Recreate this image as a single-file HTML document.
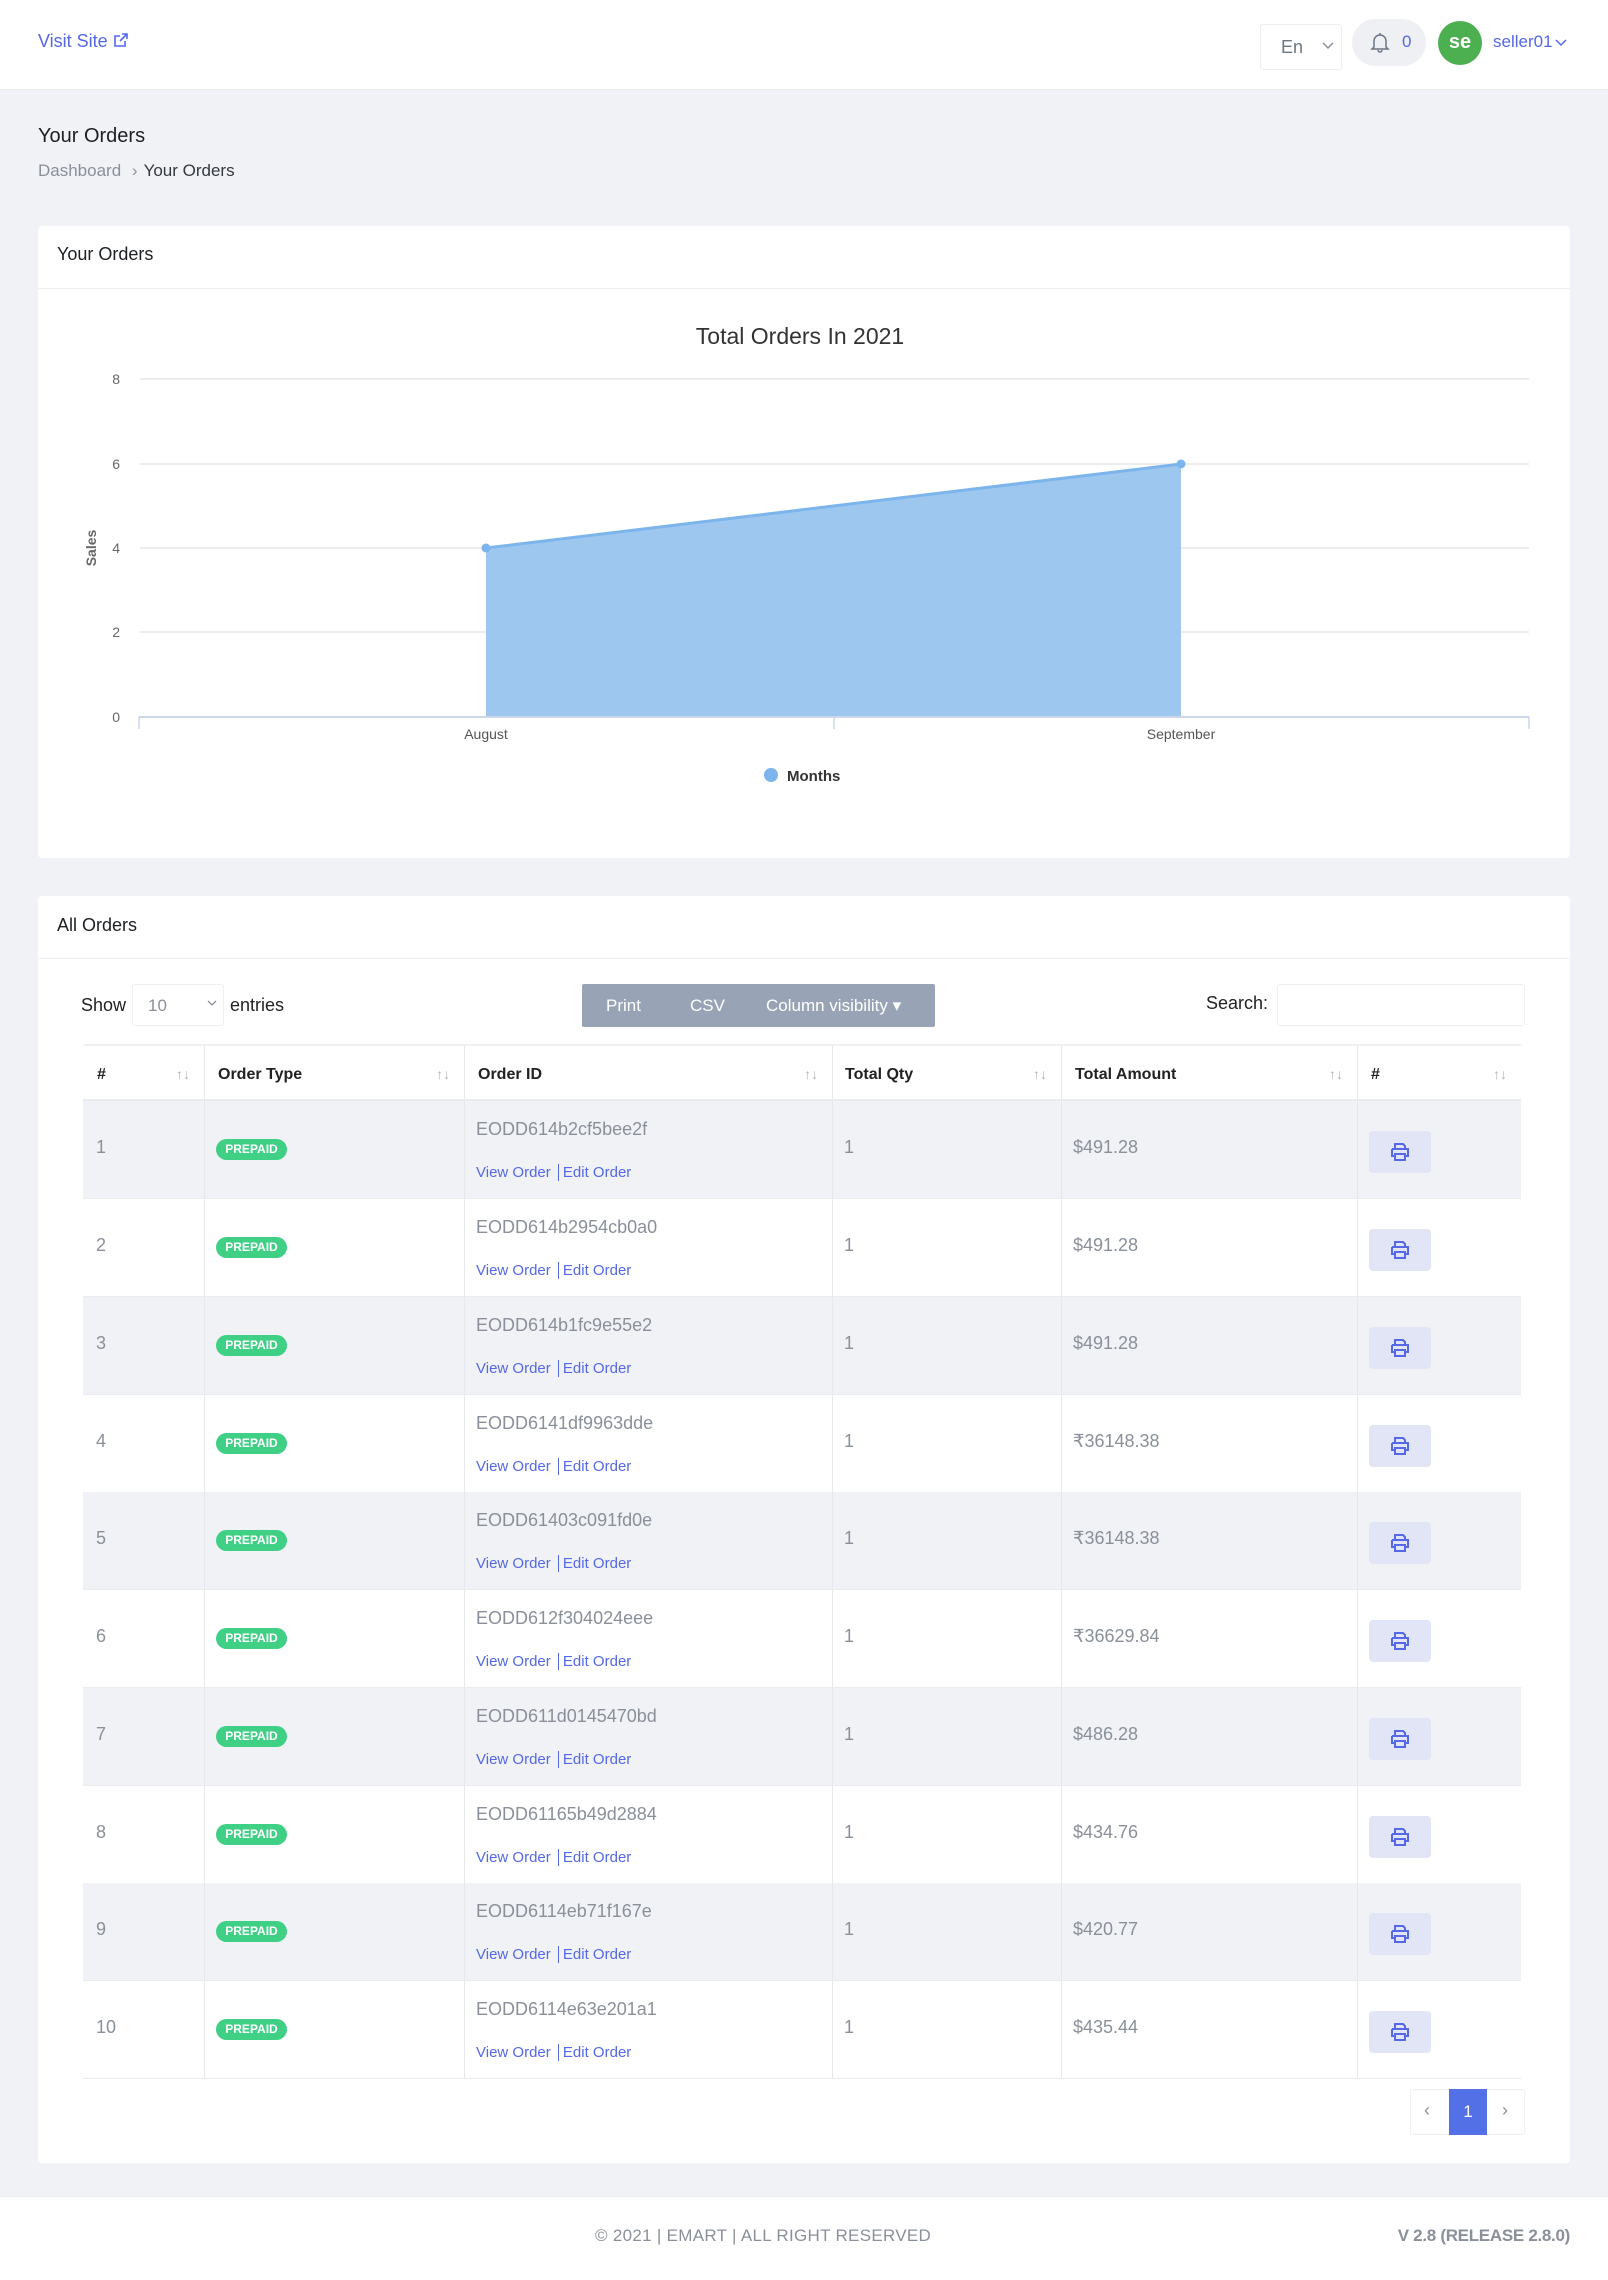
<!DOCTYPE html>
<html><head><meta charset="utf-8"><style>
*{margin:0;padding:0;box-sizing:border-box}
body{width:1608px;height:2280px;background:#f1f2f6;font-family:"Liberation Sans",sans-serif;position:relative;overflow:hidden;color:#343a40}
.a{position:absolute}
.hdr{left:0;top:0;width:1608px;height:90px;background:#fff;border-bottom:1px solid #e9eaee}
.card{background:#fff;border-radius:4px}
.row{left:83px;width:1438px;height:98px;border-bottom:1px solid #e9ecef}
.row.odd{background:#f1f2f6}
.vl{top:0;bottom:0;width:1px;background:#e6e8ec}
.badge{left:133px;top:38px;width:71px;height:21px;border-radius:11px;background:#3fcf85;color:#fff;font-size:12px;font-weight:bold;text-align:center;line-height:21px}
.num{left:13px;top:36px;font-size:18px;color:#8a909a}
.oid{left:393px;top:18px;font-size:18px;color:#8a909a}
.lnk{left:393px;top:63px;font-size:15px;color:#5468e8}
.lnk span{color:#5468e8;border-left:1px solid #5468e8;padding-left:4px;margin-left:3px}
.qty{left:761px;top:36px;font-size:18px;color:#8a909a}
.amt{left:990px;top:36px;font-size:18px;color:#8a909a}
.pb{left:1286px;top:30px;width:62px;height:42px;background:#e1e5f6;border-radius:4px}
.th{top:0;height:57px;line-height:57px;font-size:16px;font-weight:bold;color:#222}
.sort{font-size:14px;color:#b0b4bc;font-weight:normal}
</style></head><body>
<div class="a hdr"></div>
<div class="a" style="left:38px;top:31px;font-size:18px;color:#5468e8">Visit Site <svg width="16" height="16" viewBox="0 0 16 16" style="vertical-align:-1px"><path d="M12 9v5H2V4h5M9 2h5v5M14 2L7 9" fill="none" stroke="#5468e8" stroke-width="1.6"/></svg></div>
<div class="a" style="left:1260px;top:24px;width:82px;height:46px;border:1px solid #eceef2;border-radius:3px;background:#fff"></div>
<div class="a" style="left:1281px;top:37px;font-size:18px;color:#6c7684">En</div>
<svg class="a" style="left:1322px;top:42px" width="12" height="8" viewBox="0 0 12 8"><path d="M1 1l5 5 5-5" fill="none" stroke="#8a909a" stroke-width="1.5"/></svg>
<div class="a" style="left:1352px;top:19px;width:74px;height:47px;border-radius:24px;background:#eff0f4"></div>
<svg class="a" style="left:1370px;top:31px" width="20" height="22" viewBox="0 0 20 22"><path d="M10 2v2M4 16V10a6 6 0 0112 0v6l2 2H2zM8 19a2 2 0 004 0" fill="none" stroke="#6c7684" stroke-width="1.5"/></svg>
<div class="a" style="left:1402px;top:32px;font-size:17px;color:#5468e8">0</div>
<div class="a" style="left:1438px;top:21px;width:44px;height:44px;border-radius:50%;background:#4caf50;color:#fff;font-weight:bold;font-size:20px;text-align:center;line-height:42px">se</div>
<div class="a" style="left:1493px;top:32px;font-size:17px;color:#5468e8">seller01<svg width="12" height="8" viewBox="0 0 12 8" style="margin-left:2px"><path d="M1 1l5 5 5-5" fill="none" stroke="#5468e8" stroke-width="1.5"/></svg></div>

<div class="a" style="left:38px;top:125px;font-size:20px;color:#1c1f24">Your Orders</div>
<div class="a" style="left:38px;top:161px;font-size:17px;color:#8a909a">Dashboard <span style="margin:0 6px;color:#8a909a">›</span><span style="color:#343a40">Your Orders</span></div>

<div class="a card" style="left:38px;top:226px;width:1532px;height:632px"></div>
<div class="a" style="left:38px;top:288px;width:1532px;height:1px;background:#eef0f3"></div>
<div class="a" style="left:57px;top:244px;font-size:18px;color:#1c1f24">Your Orders</div>
<svg class="a" style="left:38px;top:300px" width="1532" height="500" viewBox="38 300 1532 500">
<text x="800" y="344" font-size="23" text-anchor="middle" fill="#333" font-family="Liberation Sans">Total Orders In 2021</text>
<g stroke="#e6e6e6" stroke-width="1.5"><line x1="140" y1="379" x2="1529" y2="379"/><line x1="140" y1="464" x2="1529" y2="464"/><line x1="140" y1="548" x2="1529" y2="548"/><line x1="140" y1="632" x2="1529" y2="632"/></g>
<g font-size="14" fill="#666" font-family="Liberation Sans" text-anchor="end"><text x="120" y="384">8</text><text x="120" y="469">6</text><text x="120" y="553">4</text><text x="120" y="637">2</text><text x="120" y="722">0</text></g>
<text transform="translate(96,548) rotate(-90)" font-size="14" font-weight="bold" fill="#666" text-anchor="middle" font-family="Liberation Sans">Sales</text>
<path d="M486 548L1181 464L1181 717L486 717Z" fill="#9ec7f0"/>
<path d="M486 548L1181 464" stroke="#7cb5ec" stroke-width="3"/>
<circle cx="486" cy="548" r="4.5" fill="#7cb5ec"/><circle cx="1181" cy="464" r="4.5" fill="#7cb5ec"/>
<line x1="139" y1="717" x2="1529" y2="717" stroke="#ccd6eb" stroke-width="2"/>
<g stroke="#ccd6eb" stroke-width="1.5"><line x1="139" y1="717" x2="139" y2="729"/><line x1="834" y1="717" x2="834" y2="729"/><line x1="1529" y1="717" x2="1529" y2="729"/></g>
<g font-size="14" fill="#555" font-family="Liberation Sans" text-anchor="middle"><text x="486" y="739">August</text><text x="1181" y="739">September</text></g>
<circle cx="771" cy="775" r="7" fill="#7cb5ec"/>
<text x="787" y="781" font-size="15" font-weight="bold" fill="#333" font-family="Liberation Sans">Months</text>
</svg>

<div class="a card" style="left:38px;top:896px;width:1532px;height:1267px"></div>
<div class="a" style="left:38px;top:958px;width:1532px;height:1px;background:#eef0f3"></div>
<div class="a" style="left:57px;top:915px;font-size:18px;color:#1c1f24">All Orders</div>
<div class="a" style="left:81px;top:995px;font-size:18px;color:#222">Show</div>
<div class="a" style="left:132px;top:984px;width:92px;height:42px;border:1px solid #eef0f3;border-radius:3px"></div>
<div class="a" style="left:148px;top:996px;font-size:17px;color:#8a909a">10</div>
<svg class="a" style="left:207px;top:1000px" width="10" height="7" viewBox="0 0 10 7"><path d="M1 1l4 4 4-4" fill="none" stroke="#8a909a" stroke-width="1.3"/></svg>
<div class="a" style="left:230px;top:995px;font-size:18px;color:#222">entries</div>
<div class="a" style="left:582px;top:984px;width:353px;height:43px;background:#98a4b6;border-radius:2px;color:#fff;font-size:17px;line-height:43px">
<span class="a" style="left:24px">Print</span><span class="a" style="left:108px">CSV</span><span class="a" style="left:184px">Column visibility ▾</span></div>
<div class="a" style="left:1206px;top:993px;font-size:18px;color:#222">Search:</div>
<div class="a" style="left:1277px;top:984px;width:248px;height:42px;border:1px solid #eef0f3;border-radius:3px"></div>

<div class="a" style="left:83px;top:1044px;width:1438px;height:57px;border-top:2px solid #eef0f3;border-bottom:2px solid #e9ecef">
<div class="a vl" style="left:121px"></div><div class="a vl" style="left:381px"></div><div class="a vl" style="left:749px"></div><div class="a vl" style="left:978px"></div><div class="a vl" style="left:1274px"></div>
<div class="a th" style="left:14px">#</div><div class="a th sort" style="left:93px">↑↓</div>
<div class="a th" style="left:135px">Order Type</div><div class="a th sort" style="left:353px">↑↓</div>
<div class="a th" style="left:395px">Order ID</div><div class="a th sort" style="left:721px">↑↓</div>
<div class="a th" style="left:762px">Total Qty</div><div class="a th sort" style="left:950px">↑↓</div>
<div class="a th" style="left:992px">Total Amount</div><div class="a th sort" style="left:1246px">↑↓</div>
<div class="a th" style="left:1288px">#</div><div class="a th sort" style="left:1410px">↑↓</div>
</div>

<div class="a row odd" style="top:1101px"><div class="a vl" style="left:121px"></div><div class="a vl" style="left:381px"></div><div class="a vl" style="left:749px"></div><div class="a vl" style="left:978px"></div><div class="a vl" style="left:1274px"></div><div class="a num">1</div><div class="a badge">PREPAID</div><div class="a oid" style="left:393px">EODD614b2cf5bee2f</div><div class="a lnk">View Order <span>Edit Order</span></div><div class="a qty">1</div><div class="a amt">$491.28</div><div class="a pb"><svg style="margin:12px 0 0 21px" width="20" height="18" viewBox="0 0 20 18"><path d="M5 6V1h8l2 2v3M2 6h16v7h-3M5 13H2V6" fill="none" stroke="#5468e8" stroke-width="2"/><rect x="5" y="11" width="10" height="6" fill="none" stroke="#5468e8" stroke-width="2"/></svg></div></div>
<div class="a row" style="top:1199px"><div class="a vl" style="left:121px"></div><div class="a vl" style="left:381px"></div><div class="a vl" style="left:749px"></div><div class="a vl" style="left:978px"></div><div class="a vl" style="left:1274px"></div><div class="a num">2</div><div class="a badge">PREPAID</div><div class="a oid">EODD614b2954cb0a0</div><div class="a lnk">View Order <span>Edit Order</span></div><div class="a qty">1</div><div class="a amt">$491.28</div><div class="a pb"><svg style="margin:12px 0 0 21px" width="20" height="18" viewBox="0 0 20 18"><path d="M5 6V1h8l2 2v3M2 6h16v7h-3M5 13H2V6" fill="none" stroke="#5468e8" stroke-width="2"/><rect x="5" y="11" width="10" height="6" fill="none" stroke="#5468e8" stroke-width="2"/></svg></div></div>
<div class="a row odd" style="top:1297px"><div class="a vl" style="left:121px"></div><div class="a vl" style="left:381px"></div><div class="a vl" style="left:749px"></div><div class="a vl" style="left:978px"></div><div class="a vl" style="left:1274px"></div><div class="a num">3</div><div class="a badge">PREPAID</div><div class="a oid">EODD614b1fc9e55e2</div><div class="a lnk">View Order <span>Edit Order</span></div><div class="a qty">1</div><div class="a amt">$491.28</div><div class="a pb"><svg style="margin:12px 0 0 21px" width="20" height="18" viewBox="0 0 20 18"><path d="M5 6V1h8l2 2v3M2 6h16v7h-3M5 13H2V6" fill="none" stroke="#5468e8" stroke-width="2"/><rect x="5" y="11" width="10" height="6" fill="none" stroke="#5468e8" stroke-width="2"/></svg></div></div>
<div class="a row" style="top:1395px"><div class="a vl" style="left:121px"></div><div class="a vl" style="left:381px"></div><div class="a vl" style="left:749px"></div><div class="a vl" style="left:978px"></div><div class="a vl" style="left:1274px"></div><div class="a num">4</div><div class="a badge">PREPAID</div><div class="a oid">EODD6141df9963dde</div><div class="a lnk">View Order <span>Edit Order</span></div><div class="a qty">1</div><div class="a amt">₹36148.38</div><div class="a pb"><svg style="margin:12px 0 0 21px" width="20" height="18" viewBox="0 0 20 18"><path d="M5 6V1h8l2 2v3M2 6h16v7h-3M5 13H2V6" fill="none" stroke="#5468e8" stroke-width="2"/><rect x="5" y="11" width="10" height="6" fill="none" stroke="#5468e8" stroke-width="2"/></svg></div></div>
<div class="a row odd" style="top:1492px"><div class="a vl" style="left:121px"></div><div class="a vl" style="left:381px"></div><div class="a vl" style="left:749px"></div><div class="a vl" style="left:978px"></div><div class="a vl" style="left:1274px"></div><div class="a num">5</div><div class="a badge">PREPAID</div><div class="a oid">EODD61403c091fd0e</div><div class="a lnk">View Order <span>Edit Order</span></div><div class="a qty">1</div><div class="a amt">₹36148.38</div><div class="a pb"><svg style="margin:12px 0 0 21px" width="20" height="18" viewBox="0 0 20 18"><path d="M5 6V1h8l2 2v3M2 6h16v7h-3M5 13H2V6" fill="none" stroke="#5468e8" stroke-width="2"/><rect x="5" y="11" width="10" height="6" fill="none" stroke="#5468e8" stroke-width="2"/></svg></div></div>
<div class="a row" style="top:1590px"><div class="a vl" style="left:121px"></div><div class="a vl" style="left:381px"></div><div class="a vl" style="left:749px"></div><div class="a vl" style="left:978px"></div><div class="a vl" style="left:1274px"></div><div class="a num">6</div><div class="a badge">PREPAID</div><div class="a oid">EODD612f304024eee</div><div class="a lnk">View Order <span>Edit Order</span></div><div class="a qty">1</div><div class="a amt">₹36629.84</div><div class="a pb"><svg style="margin:12px 0 0 21px" width="20" height="18" viewBox="0 0 20 18"><path d="M5 6V1h8l2 2v3M2 6h16v7h-3M5 13H2V6" fill="none" stroke="#5468e8" stroke-width="2"/><rect x="5" y="11" width="10" height="6" fill="none" stroke="#5468e8" stroke-width="2"/></svg></div></div>
<div class="a row odd" style="top:1688px"><div class="a vl" style="left:121px"></div><div class="a vl" style="left:381px"></div><div class="a vl" style="left:749px"></div><div class="a vl" style="left:978px"></div><div class="a vl" style="left:1274px"></div><div class="a num">7</div><div class="a badge">PREPAID</div><div class="a oid">EODD611d0145470bd</div><div class="a lnk">View Order <span>Edit Order</span></div><div class="a qty">1</div><div class="a amt">$486.28</div><div class="a pb"><svg style="margin:12px 0 0 21px" width="20" height="18" viewBox="0 0 20 18"><path d="M5 6V1h8l2 2v3M2 6h16v7h-3M5 13H2V6" fill="none" stroke="#5468e8" stroke-width="2"/><rect x="5" y="11" width="10" height="6" fill="none" stroke="#5468e8" stroke-width="2"/></svg></div></div>
<div class="a row" style="top:1786px"><div class="a vl" style="left:121px"></div><div class="a vl" style="left:381px"></div><div class="a vl" style="left:749px"></div><div class="a vl" style="left:978px"></div><div class="a vl" style="left:1274px"></div><div class="a num">8</div><div class="a badge">PREPAID</div><div class="a oid">EODD61165b49d2884</div><div class="a lnk">View Order <span>Edit Order</span></div><div class="a qty">1</div><div class="a amt">$434.76</div><div class="a pb"><svg style="margin:12px 0 0 21px" width="20" height="18" viewBox="0 0 20 18"><path d="M5 6V1h8l2 2v3M2 6h16v7h-3M5 13H2V6" fill="none" stroke="#5468e8" stroke-width="2"/><rect x="5" y="11" width="10" height="6" fill="none" stroke="#5468e8" stroke-width="2"/></svg></div></div>
<div class="a row odd" style="top:1883px"><div class="a vl" style="left:121px"></div><div class="a vl" style="left:381px"></div><div class="a vl" style="left:749px"></div><div class="a vl" style="left:978px"></div><div class="a vl" style="left:1274px"></div><div class="a num">9</div><div class="a badge">PREPAID</div><div class="a oid">EODD6114eb71f167e</div><div class="a lnk">View Order <span>Edit Order</span></div><div class="a qty">1</div><div class="a amt">$420.77</div><div class="a pb"><svg style="margin:12px 0 0 21px" width="20" height="18" viewBox="0 0 20 18"><path d="M5 6V1h8l2 2v3M2 6h16v7h-3M5 13H2V6" fill="none" stroke="#5468e8" stroke-width="2"/><rect x="5" y="11" width="10" height="6" fill="none" stroke="#5468e8" stroke-width="2"/></svg></div></div>
<div class="a row" style="top:1981px"><div class="a vl" style="left:121px"></div><div class="a vl" style="left:381px"></div><div class="a vl" style="left:749px"></div><div class="a vl" style="left:978px"></div><div class="a vl" style="left:1274px"></div><div class="a num">10</div><div class="a badge">PREPAID</div><div class="a oid">EODD6114e63e201a1</div><div class="a lnk">View Order <span>Edit Order</span></div><div class="a qty">1</div><div class="a amt">$435.44</div><div class="a pb"><svg style="margin:12px 0 0 21px" width="20" height="18" viewBox="0 0 20 18"><path d="M5 6V1h8l2 2v3M2 6h16v7h-3M5 13H2V6" fill="none" stroke="#5468e8" stroke-width="2"/><rect x="5" y="11" width="10" height="6" fill="none" stroke="#5468e8" stroke-width="2"/></svg></div></div>

<div class="a" style="left:1410px;top:2089px;width:115px;height:46px;border:1px solid #eef0f3;border-radius:3px"></div>
<div class="a" style="left:1424px;top:2100px;font-size:18px;color:#8a909a">‹</div>
<div class="a" style="left:1449px;top:2089px;width:38px;height:46px;background:#5470e6;color:#fff;font-size:17px;text-align:center;line-height:46px">1</div>
<div class="a" style="left:1502px;top:2100px;font-size:18px;color:#8a909a">›</div>

<div class="a" style="left:0;top:2196px;width:1608px;height:84px;background:#fff;border-top:1px solid #eceef2"></div>
<div class="a" style="left:595px;top:2226px;font-size:17px;color:#8a909a;letter-spacing:0.3px">© 2021 | EMART | ALL RIGHT RESERVED</div>
<div class="a" style="right:38px;top:2226px;font-size:17px;font-weight:bold;color:#8a909a;letter-spacing:-0.3px;white-space:nowrap">V 2.8 (RELEASE 2.8.0)</div>
</body></html>
